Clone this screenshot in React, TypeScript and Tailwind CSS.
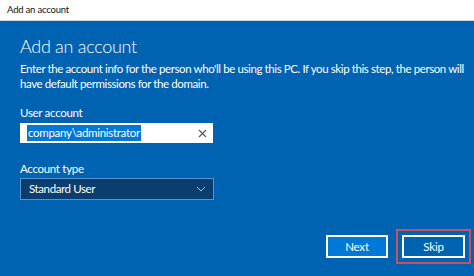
import React from "react";

export default function App() {
  const font = { fontFamily: 'Lato, "Open Sans", Arial, sans-serif' };
  return (
    <div className="w-[474px] h-[276px] overflow-hidden flex flex-col bg-[#0063b1]" style={font}>
      <div className="h-[21px] shrink-0 bg-white flex items-center pl-[7px] text-[9.5px] tracking-[-0.2px] text-[#111] border-b border-[#cfd8e3]">
        Add an account
      </div>
      <div className="flex-1 flex flex-col px-[20px] pt-[13px] text-white">
        <div className="text-[18px] font-light leading-[24px] tracking-[-0.3px]">Add an account</div>
        <p className="mt-[3px] text-[11.5px] leading-[15px] tracking-[-0.4px] whitespace-nowrap">
          Enter the account info for the person who'll be using this PC. If you skip this step, the person will
          <br />
          have default permissions for the domain.
        </p>
        <div className="mt-[14px] text-[11.5px] leading-[16px] tracking-[-0.3px]">User account</div>
        <div className="mt-[2px] w-[193px] h-[20px] bg-white flex items-center pl-[7px] pr-[6px]">
          <span className="bg-[#0078d7] text-white text-[11.5px] tracking-[-0.3px] leading-[16px] px-[1px]">company\administrator</span>
          <span className="ml-auto text-[#555]">
            <svg width="9" height="9" viewBox="0 0 9 9">
              <path d="M1 1L8 8M8 1L1 8" stroke="#555" strokeWidth="1.1" />
            </svg>
          </span>
        </div>
        <div className="mt-[18px] text-[11.5px] leading-[16px] tracking-[-0.3px]">Account type</div>
        <div className="mt-[1px] w-[194px] h-[22px] bg-[#0b3d6e] border border-[#5a93cc] flex items-center pl-[8px] pr-[7px]">
          <span className="text-[11.5px] tracking-[-0.4px]">Standard User</span>
          <svg className="ml-auto" width="10" height="6" viewBox="0 0 10 6">
            <path d="M1 1L5 5L9 1" stroke="#9fc3e6" strokeWidth="1" fill="none" />
          </svg>
        </div>
        <div className="flex justify-end gap-[8px] mt-auto mb-[12px] mr-[-17px]">
          <button className="w-[62px] h-[23px] mt-[6px] bg-[#0078d7] border-2 border-white text-white text-[11.5px] tracking-[-0.2px] leading-none">
            Next
          </button>
          <div className="border-2 border-[#c9515a] p-[4px]">
            <button className="w-[63px] h-[23px] bg-[#0063b1] border-2 border-white text-white text-[11.5px] tracking-[-0.2px] leading-none block">
              Skip
            </button>
          </div>
        </div>
      </div>
    </div>
  );
}
